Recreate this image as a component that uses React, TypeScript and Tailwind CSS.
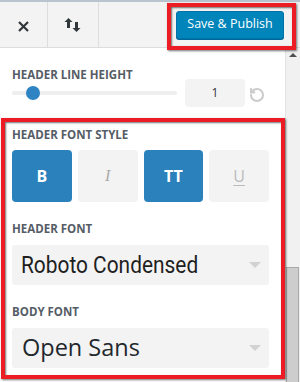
import { RotateCcw } from "lucide-react";

const Label = ({ children, className = "" }: { children: string; className?: string }) => (
  <div className={`h-[12px] leading-[12px] text-[11.5px] font-bold uppercase text-[#555d66] ${className}`}>
    {children}
  </div>
);

const Caret = () => (
  <span className="w-0 h-0 border-l-[6px] border-r-[6px] border-t-[6px] border-l-transparent border-r-transparent border-t-[#d2d2d2] mr-[8px]" />
);

export default function App() {
  return (
    <div className="relative w-[300px] h-[382px] overflow-hidden bg-white font-['Open_Sans',sans-serif]">
      <div className="h-[2px] bg-[#b9c3cf]" />
      <header className="flex h-[46px] bg-[#f3f3f3] border-b border-[#dddddd]">
        <button className="w-[48px] flex items-center justify-center border-r border-[#dddddd] pt-[3px]">
          <svg width="11" height="11" viewBox="0 0 11 11">
            <path d="M1 1L10 10M10 1L1 10" stroke="#32373c" strokeWidth="2.2" />
          </svg>
        </button>
        <button className="w-[51px] flex items-center justify-center border-r border-[#dddddd]">
          <svg width="18" height="16" viewBox="0 0 18 16">
            <path d="M4.5 1L8.5 5H6V11H3V5H0.5Z" fill="#32373c" />
            <path d="M12.5 15L16.5 11H14V5H11V11H8.5Z" fill="#32373c" />
          </svg>
        </button>
        <div className="flex-1 flex items-center justify-end pr-[16px]">
          <button className="w-[108px] h-[28px] rounded-[3px] bg-[#0085ba] border border-[#0073aa] text-white text-[12.5px] leading-none shadow-[0_1px_0_#006799]">
            Save &amp; Publish
          </button>
        </div>
      </header>

      <div className="flex h-[334px]">
        <main className="flex-1 pl-[12px] pr-[16px]">
          <Label className="mt-[21px]">Header Line Height</Label>
          <div className="flex items-center h-[28px] mt-[-2px]">
            <div className="relative w-[165px] h-[4px] rounded-full bg-[#eeeeee]">
              <span className="absolute left-[14px] top-[-5px] w-[14px] h-[14px] rounded-full bg-[#2e83c3]" />
            </div>
            <div className="ml-[8px] w-[60px] h-[28px] rounded-[4px] bg-[#f3f3f3] flex items-center justify-center text-[12px] text-[#32373c]">
              1
            </div>
            <div className="flex-1 flex justify-center pt-[3px]">
              <RotateCcw size={16} strokeWidth={3.2} color="#cccccc" />
            </div>
          </div>

          <Label className="mt-[22px]">Header Font Style</Label>
          <div className="grid grid-cols-4 gap-[6px] mt-[9px] h-[52px]">
            <button className="rounded-[4px] bg-[#2a81bb] text-white font-bold text-[16px]">B</button>
            <button className="rounded-[4px] bg-[#f3f3f3] text-[#aaaaaa] italic text-[16px] font-['Liberation_Serif',serif]">I</button>
            <button className="rounded-[4px] bg-[#2a81bb] text-white font-bold text-[16px]">TT</button>
            <button className="rounded-[4px] bg-[#f3f3f3] text-[#bbbbbb] text-[16px] underline underline-offset-[3px]">U</button>
          </div>

          <Label className="mt-[21px]">Header Font</Label>
          <div className="mt-[10px] h-[40px] rounded-[3px] bg-[#f3f3f3] flex items-center justify-between pl-[9px]">
            <span className="inline-block origin-left scale-x-[0.87] font-['Roboto',sans-serif] text-[24px] text-[#1f1f1f] leading-none whitespace-nowrap">
              Roboto Condensed
            </span>
            <Caret />
          </div>

          <Label className="mt-[21px]">Body Font</Label>
          <div className="mt-[10px] h-[40px] rounded-[3px] bg-[#f3f3f3] flex items-center justify-between pl-[10px]">
            <span className="text-[23.5px] text-[#23282d] leading-none">Open Sans</span>
            <Caret />
          </div>
        </main>

        <aside className="relative w-[15px] bg-[#f1f1f1] border-l border-[#e3e3e3]">
          <span className="absolute left-[3px] top-[5px] w-0 h-0 border-l-[4px] border-r-[4px] border-b-[4px] border-l-transparent border-r-transparent border-b-[#505050]" />
          <span className="absolute left-[0px] top-[219px] w-[13px] h-[130px] bg-[#cdcdcd] border border-[#a9a9a9]" />
        </aside>
      </div>

      {/* annotation boxes */}
      <div className="absolute left-[167px] top-[3px] w-[129px] h-[47px] border-[4px] border-[#ec1c24] shadow-[1px_1px_2px_rgba(0,0,0,0.55),inset_1px_1px_2px_rgba(0,0,0,0.55)]" />
      <div className="absolute left-[1px] top-[118px] w-[284px] h-[261px] border-[4px] border-[#ec1c24] shadow-[1px_1px_2px_rgba(0,0,0,0.55),inset_1px_1px_2px_rgba(0,0,0,0.55)]" />
    </div>
  );
}
